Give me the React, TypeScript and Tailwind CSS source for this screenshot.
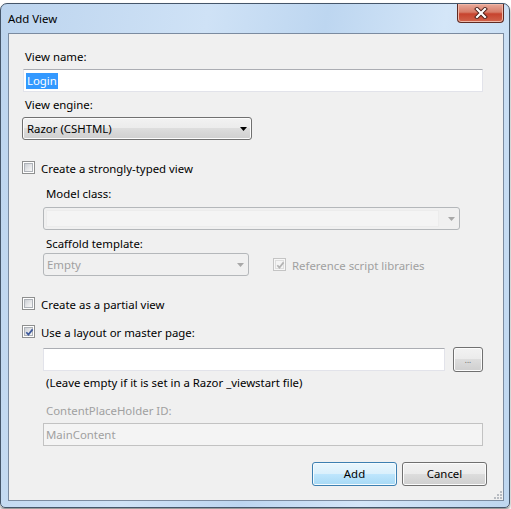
import React from "react";

const face = "font-['Noto_Sans',sans-serif] text-[11.4px] leading-[16px]";
const btnGray =
  "bg-[linear-gradient(to_bottom,#f2f2f2_0%,#ebebeb_50%,#dddddd_50%,#cfcfcf_100%)] border-[#707070] shadow-[inset_0_0_0_1px_#fcfcfc]";
const btnBlue =
  "bg-[linear-gradient(to_bottom,#eaf6fd_0%,#d9f0fc_50%,#bee6fd_50%,#a7d9f5_100%)] border-[#3c7fb1] shadow-[inset_0_0_0_1px_#f4fbfe]";

function CheckBox({ checked = false, disabled = false }: { checked?: boolean; disabled?: boolean }) {
  return (
    <div
      className={`relative w-[13px] h-[13px] shrink-0 border p-[1px] ${
        disabled ? "border-[#c4c4c4] bg-[#f7f7f7]" : "border-[#8e8f8f] bg-white"
      }`}
    >
      <div
        className={`w-full h-full border ${
          disabled
            ? "border-[#dedede] bg-[#f4f4f4]"
            : "border-[#aeb2b8] bg-[linear-gradient(135deg,#cbcfd4_0%,#e6e7e9_55%,#f7f7f7_100%)]"
        }`}
      />
      {checked && (
        <svg className="absolute left-0 top-0" width="13" height="13" viewBox="0 0 13 13">
          <path
            d="M3.3 6.2 L5.4 8.6 L9.6 3.4"
            fill="none"
            stroke={disabled ? "#b4b4b4" : "#3f5a9c"}
            strokeWidth="1.7"
          />
        </svg>
      )}
    </div>
  );
}

function Arrow({ color }: { color: string }) {
  return (
    <svg width="7" height="4" viewBox="0 0 7 4" className="shrink-0">
      <path d="M0 0 H7 L3.5 4 Z" fill={color} />
    </svg>
  );
}

function Combo({
  w,
  text,
  disabled = false,
  editable = false,
}: {
  w: string;
  text?: string;
  disabled?: boolean;
  editable?: boolean;
}) {
  return (
    <div
      className={`${w} h-[23px] flex items-center justify-between rounded-[3px] border pr-[4px] ${
        disabled ? "pl-[3px] border-[#b4b7ba] bg-[#f0f0f0] text-[#a0a0a0]" : `pl-[4px] ${btnGray}`
      }`}
    >
      {editable ? (
        <div className="flex-1 mr-[9px] -ml-[1px] h-[17px] border border-[#ececec] bg-[#f4f4f4]" />
      ) : (
        <span>{text}</span>
      )}
      <Arrow color={disabled ? "#a8a8a8" : "#000"} />
    </div>
  );
}

function TextBox({ w, children, disabled = false }: { w: string; children?: React.ReactNode; disabled?: boolean }) {
  return (
    <div
      className={`${w} h-[23px] flex items-center pl-[2px] border ${
        disabled
          ? "border-[#c2c2c2] bg-[#f4f4f4] text-[#a0a0a0]"
          : "border-[#e2e3ea] border-t-[#abadb3] bg-white"
      }`}
    >
      {children}
    </div>
  );
}

function Label({ indent, muted = false, children }: { indent: string; muted?: boolean; children: React.ReactNode }) {
  return <div className={`${indent} h-[16px] pt-[2px] ${muted ? "text-[#a0a0a0]" : ""}`}>{children}</div>;
}

function CheckRow({ checked = false, children }: { checked?: boolean; children: React.ReactNode }) {
  return (
    <div className="pl-[13px] h-[16px] flex items-start gap-[6px]">
      <div className="mt-[2px]">
        <CheckBox checked={checked} />
      </div>
      <span className="pt-[2px]">{children}</span>
    </div>
  );
}

function CloseButton() {
  return (
    <div className="w-[47px] h-[19px] mr-[5px] flex items-center justify-center rounded-b-[4px] border border-t-0 border-[#5e2a22] bg-[linear-gradient(to_bottom,#e9a99a_0%,#d77d69_45%,#c7432e_55%,#d1644c_100%)] shadow-[inset_0_0_0_1px_#f0b8a8]">
      <svg width="14" height="12" viewBox="0 0 14 12">
        <path d="M3 2 L11 10 M11 2 L3 10" stroke="#4a1e18" strokeWidth="4" strokeLinecap="square" />
        <path d="M3 2 L11 10 M11 2 L3 10" stroke="#ffffff" strokeWidth="2.2" strokeLinecap="square" />
      </svg>
    </div>
  );
}

function Grip() {
  return (
    <svg width="8" height="8" viewBox="0 0 8 8">
      {[
        [6, 0],
        [6, 3],
        [3, 3],
        [6, 6],
        [3, 6],
        [0, 6],
      ].map(([x, y], i) => (
        <rect key={i} x={x} y={y} width="2" height="2" fill="#b8bcc2" />
      ))}
    </svg>
  );
}

export default function App() {
  return (
    <div className={`w-[511px] h-[509px] bg-white pt-[3px] overflow-hidden ${face} text-black`}>
      <div className="w-[510px] h-[505px] flex flex-col rounded-t-[7px] rounded-b-[5px] border border-[#45566a] bg-[linear-gradient(100deg,#bcd4ee_0%,#cfe2f6_35%,#bdd6f0_55%,#d4e6f8_75%,#bed6ef_100%)] shadow-[0_2px_3px_rgba(0,0,0,0.45)]">
        {/* title bar */}
        <div className="h-[29px] flex items-start justify-between">
          <div className="pl-[7px] pt-[7px]">Add View</div>
          <CloseButton />
        </div>

        {/* client area */}
        <div className="ml-[7px] mr-[5px] h-[468px] border border-[#7b8ba0] bg-[#f0f0f0] flex flex-col">
          <div className="mt-[13px]">
            <Label indent="pl-[16px]">View name:</Label>
          </div>
          <div className="mt-[6px] pl-[14px]">
            <TextBox w="w-[460px]">
              <span className="bg-[#3399ff] text-white pl-[1px] pr-[1px]">Login</span>
            </TextBox>
          </div>

          <div className="mt-[3px]">
            <Label indent="pl-[16px]">View engine:</Label>
          </div>
          <div className="mt-[6px] pl-[13px]">
            <Combo w="w-[230px]" text="Razor (CSHTML)" />
          </div>

          <div className="mt-[19px]">
            <CheckRow>Create a strongly-typed view</CheckRow>
          </div>

          <div className="mt-[9px]">
            <Label indent="pl-[37px]">Model class:</Label>
          </div>
          <div className="mt-[7px] pl-[34px]">
            <Combo w="w-[417px]" disabled editable />
          </div>

          <div className="mt-[4px]">
            <Label indent="pl-[37px]">Scaffold template:</Label>
          </div>
          <div className="mt-[3px] pl-[34px] flex items-center">
            <Combo w="w-[206px]" text="Empty" disabled />
            <div className="ml-[24px] flex items-center gap-[6px] text-[#a0a0a0]">
              <CheckBox checked disabled />
              <span className="pt-[2px]">Reference script libraries</span>
            </div>
          </div>

          <div className="mt-[19px]">
            <CheckRow>Create as a partial view</CheckRow>
          </div>

          <div className="mt-[12px]">
            <CheckRow checked>Use a layout or master page:</CheckRow>
          </div>

          <div className="mt-[8px] pl-[34px] h-[25px] flex items-center">
            <TextBox w="w-[402px]" />
            <div
              className={`ml-[8px] w-[30px] h-[25px] rounded-[3px] border flex items-center justify-center text-[8px] leading-none text-[#6a6a6a] ${btnGray}`}
            >
              ...
            </div>
          </div>

          <div className="mt-[1px]">
            <Label indent="pl-[37px]">(Leave empty if it is set in a Razor _viewstart file)</Label>
          </div>

          <div className="mt-[12px]">
            <Label indent="pl-[37px]" muted>
              ContentPlaceHolder ID:
            </Label>
          </div>
          <div className="mt-[6px] pl-[34px]">
            <TextBox w="w-[440px]" disabled>
              MainContent
            </TextBox>
          </div>

          <div className="mt-[16px] pr-[16px] flex justify-end gap-[5px]">
            <div className={`w-[85px] h-[24px] rounded-[3px] border flex items-center justify-center ${btnBlue}`}>
              Add
            </div>
            <div className={`w-[85px] h-[24px] rounded-[3px] border flex items-center justify-center ${btnGray}`}>
              Cancel
            </div>
          </div>

          <div className="mt-auto mb-[1px] mr-[1px] flex justify-end">
            <Grip />
          </div>
        </div>
      </div>
    </div>
  );
}
